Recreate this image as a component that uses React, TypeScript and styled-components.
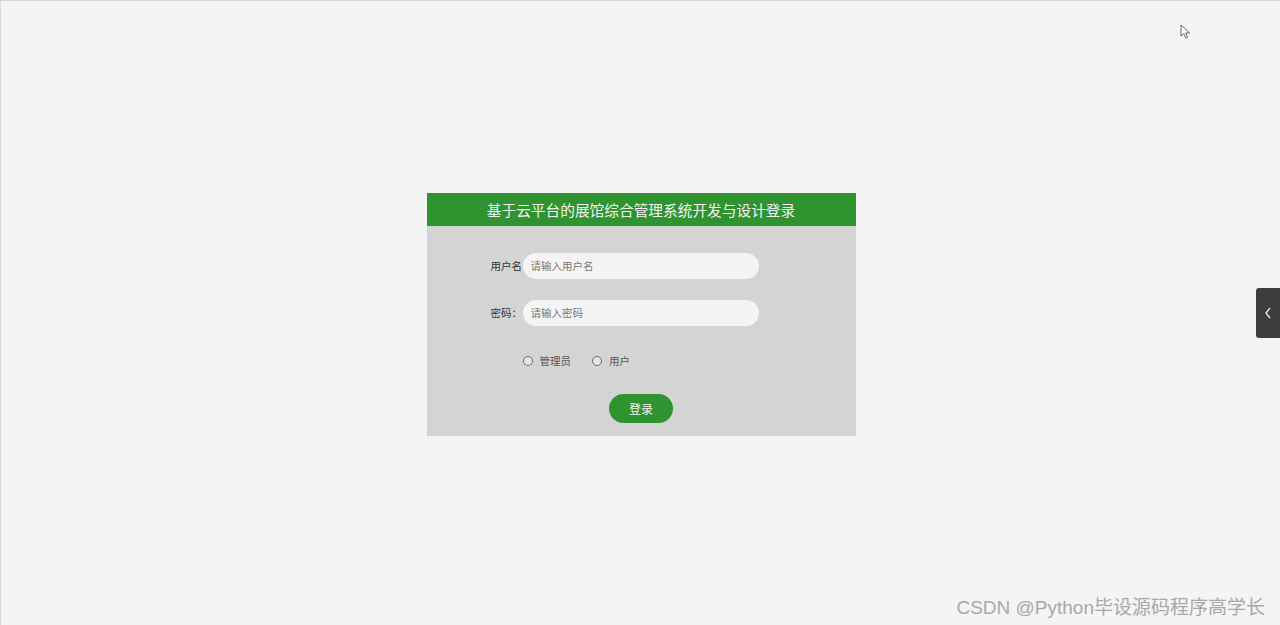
import React, { useState } from "react";
import styled, { createGlobalStyle } from "styled-components";

const GlobalStyle = createGlobalStyle`
  html, body {
    margin: 0;
    padding: 0;
    background: #f4f4f4;
    font-family: "Noto Sans CJK SC", "Noto Sans", sans-serif;
  }
  * {
    box-sizing: border-box;
  }
`;

type Role = "admin" | "user";

export default function App() {
  const [role, setRole] = useState<Role | null>(null);

  return (
    <>
      <GlobalStyle />
      <Page>
        <Panel>
          <Header>基于云平台的展馆综合管理系统开发与设计登录</Header>
          <Body>
            <FieldRow>
              <Label>用户名</Label>
              <Input placeholder="请输入用户名" />
            </FieldRow>
            <FieldRow>
              <Label>密码：</Label>
              <Input type="password" placeholder="请输入密码" />
            </FieldRow>
            <RadioRow>
              <RadioLabel onClick={() => setRole("admin")}>
                <RadioDot $checked={role === "admin"} />
                管理员
              </RadioLabel>
              <RadioLabel onClick={() => setRole("user")}>
                <RadioDot $checked={role === "user"} />
                用户
              </RadioLabel>
            </RadioRow>
            <ButtonRow>
              <LoginButton>登录</LoginButton>
            </ButtonRow>
          </Body>
        </Panel>

        <SideTab>
          <svg width="10" height="14" viewBox="0 0 10 14">
            <path d="M7 2 L3 7 L7 12" fill="none" stroke="#e8e8e8" strokeWidth="1.4" />
          </svg>
        </SideTab>

        <Cursor>
          <svg width="12" height="16" viewBox="0 0 12 16">
            <path
              d="M1 1 L1 12 L3.8 9.6 L5.8 14 L7.6 13.2 L5.7 8.9 L9.5 8.9 Z"
              fill="#fff"
              stroke="#555"
              strokeWidth="0.9"
              strokeLinejoin="round"
            />
          </svg>
        </Cursor>

        <Watermark>CSDN @Python毕设源码程序高学长</Watermark>
      </Page>
    </>
  );
}

const Page = styled.div`
  position: relative;
  height: 625px;
  overflow: hidden;
  display: flex;
  align-items: center;
  justify-content: center;
  border-top: 1px solid #d2d2d2;
  border-left: 1px solid #dadada;
  padding-top: 2px;
  padding-left: 1px;
`;

const Panel = styled.div`
  width: 429px;
  background: #d4d4d4;
  display: flex;
  flex-direction: column;
`;

const Header = styled.div`
  height: 33px;
  background: #2f9330;
  color: #f4f4f4;
  display: flex;
  align-items: center;
  justify-content: center;
  font-size: 14.7px;
  font-weight: 400;
`;

const Body = styled.div`
  display: flex;
  flex-direction: column;
  padding: 27px 0 13px 64px;
`;

const FieldRow = styled.div`
  display: flex;
  align-items: center;
  margin-bottom: 21px;
`;

const Label = styled.span`
  width: 32px;
  font-size: 10.5px;
  color: #333;
  white-space: nowrap;
`;

const Input = styled.input`
  width: 236px;
  height: 26px;
  border: none;
  outline: none;
  border-radius: 13px;
  background: #f4f4f4;
  padding: 0 8px;
  font-family: "Noto Sans CJK SC", "Noto Sans", sans-serif;
  font-size: 10.5px;
  color: #333;

  &::placeholder {
    color: #777;
  }
`;

const RadioRow = styled.div`
  display: flex;
  align-items: center;
  gap: 21px;
  padding-left: 32px;
  margin-top: 2px;
  height: 24px;
`;

const RadioLabel = styled.label`
  display: flex;
  align-items: center;
  gap: 7px;
  font-size: 10.5px;
  color: #555;
  cursor: pointer;
`;

const RadioDot = styled.span<{ $checked: boolean }>`
  width: 10px;
  height: 10px;
  border-radius: 50%;
  border: 1px solid #6e6e6e;
  background: ${(p) => (p.$checked ? "radial-gradient(circle, #2f9330 0 2.5px, #fff 3px)" : "#e6e6e6")};
`;

const ButtonRow = styled.div`
  display: flex;
  justify-content: center;
  margin-top: 21px;
  margin-left: -64px;
`;

const LoginButton = styled.button`
  width: 64px;
  height: 29px;
  border: none;
  border-radius: 15px;
  background: #2f9330;
  color: #f4f4f4;
  font-family: "Noto Sans CJK SC", "Noto Sans", sans-serif;
  font-size: 12px;
  cursor: pointer;
`;

const SideTab = styled.div`
  position: absolute;
  right: 0;
  top: 287px;
  width: 24px;
  height: 50px;
  background: #3d3d3d;
  border-radius: 3px 0 0 3px;
  display: flex;
  align-items: center;
  justify-content: center;
`;

const Cursor = styled.div`
  position: absolute;
  left: 1179px;
  top: 23px;
  line-height: 0;
`;

const Watermark = styled.div`
  position: absolute;
  right: 15px;
  bottom: 6px;
  font-family: "Liberation Sans", "Noto Sans CJK SC", sans-serif;
  font-size: 19px;
  color: #a8a8a8;
  white-space: nowrap;
`;
